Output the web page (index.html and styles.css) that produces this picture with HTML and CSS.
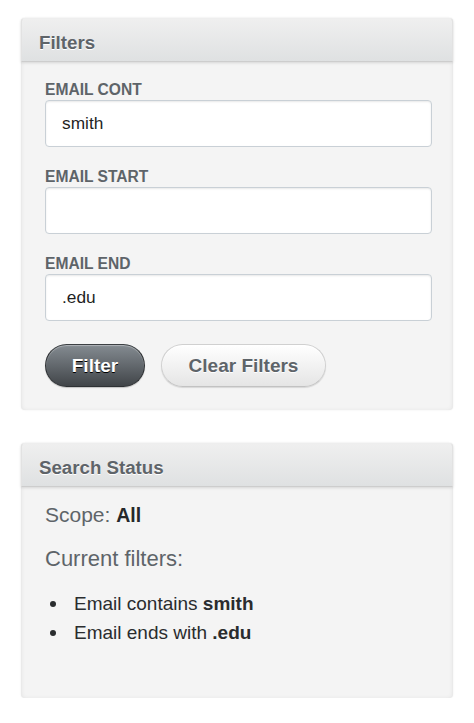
FILE: index.html
```html
<!DOCTYPE html>
<html>
<head>
<meta charset="utf-8">
<link rel="stylesheet" href="styles.css">
</head>
<body>
<div class="sidebar">
  <section class="panel">
    <h3 class="panel-title">Filters</h3>
    <form class="panel-body filters">
      <div class="field">
        <label class="label">EMAIL CONT</label>
        <input class="input" type="text" value="smith">
      </div>
      <div class="field">
        <label class="label">EMAIL START</label>
        <input class="input" type="text" value="">
      </div>
      <div class="field">
        <label class="label">EMAIL END</label>
        <input class="input" type="text" value=".edu">
      </div>
      <div class="actions">
        <button type="button" class="btn btn-dark">Filter</button>
        <button type="button" class="btn btn-light">Clear Filters</button>
      </div>
    </form>
  </section>

  <section class="panel">
    <h3 class="panel-title">Search Status</h3>
    <div class="panel-body status">
      <p class="scope">Scope: <b>All</b></p>
      <p class="current">Current filters:</p>
      <ul class="filter-list">
        <li class="filter-item">Email contains <b>smith</b></li>
        <li class="filter-item">Email ends with <b>.edu</b></li>
      </ul>
    </div>
  </section>
</div>
</body>
</html>
```

FILE: styles.css
```css
html, body {
  margin: 0;
  padding: 0;
  background: #ffffff;
}

body {
  font-family: "Liberation Sans", Arial, Helvetica, sans-serif;
  color: #323537;
}

.sidebar {
  padding: 18px 21px 0 21px;
  display: flex;
  flex-direction: column;
  gap: 33px;
}

.panel {
  background: #f4f4f4;
  border-radius: 4px;
  box-shadow: inset 0 1px 4px #dddddd, 0 0 2px rgba(0, 0, 0, 0.08);
}

.panel-title {
  margin: 0;
  padding: 12px 18px 6px 17px;
  font-size: 18.7px;
  line-height: 24px;
  font-weight: bold;
  color: #5e6469;
  text-shadow: 0 1px 0 #ffffff;
  background: linear-gradient(#efefef, #dfe1e2);
  border: 1px solid #e2e2e2;
  border-top-color: #eeeeee;
  border-bottom: 1px solid #cdcdcd;
  border-radius: 4px 4px 0 0;
  box-shadow: 0 1px 3px rgba(0, 0, 0, 0.12);
  height: 24px;
}

.filters {
  display: flex;
  flex-direction: column;
  padding: 18px 21px 23px 23px;
}

.field {
  display: flex;
  flex-direction: column;
  margin-bottom: 20px;
}

.label {
  font-size: 15.6px;
  line-height: 20px;
  font-weight: bold;
  color: #5e6469;
  margin-left: 1px;
}

.input {
  box-sizing: border-box;
  height: 47px;
  margin: 0 0 0 1px;
  padding: 0 16px;
  font-family: "Liberation Sans", Arial, sans-serif;
  font-size: 17.3px;
  color: #1f1f1f;
  background: #ffffff;
  border: 1px solid #c9d0d6;
  border-radius: 4px;
  box-shadow: inset 0 1px 2px #e8e8e8;
  outline: none;
}

.actions {
  display: flex;
  gap: 16px;
  margin-top: 3px;
  margin-left: 1px;
}

.btn {
  box-sizing: border-box;
  height: 43px;
  font-family: "Liberation Sans", Arial, sans-serif;
  font-size: 19px;
  font-weight: bold;
  line-height: 41px;
  border-radius: 200px;
  cursor: pointer;
}

.btn-dark {
  width: 100px;
  padding: 0;
  color: #ffffff;
  text-shadow: 0 1px 0 #000000;
  background: linear-gradient(#848b91, #414549);
  border: 1px solid #2e3134;
  border-top-color: #3c4043;
  box-shadow: inset 0 1px 1px rgba(255, 255, 255, 0.35), 0 1px 1px rgba(0, 0, 0, 0.2);
}

.btn-light {
  width: 165px;
  padding: 0;
  color: #5e6469;
  text-shadow: 0 1px 0 #ffffff;
  background: linear-gradient(#ffffff, #e5e5e5);
  border: 1px solid #d0d0d0;
  border-bottom-color: #c2c2c2;
  box-shadow: inset 0 1px 1px #ffffff, 0 1px 1px rgba(0, 0, 0, 0.12);
}

.status {
  padding: 14px 21px 51px 24px;
}

.scope {
  margin: 0;
  font-size: 21px;
  line-height: 28px;
  color: #5e6469;
}

.scope b {
  color: #26282a;
  font-size: 19.5px;
}

.current {
  margin: 16px 0 0 0;
  font-size: 22px;
  line-height: 28px;
  color: #5e6469;
}

.filter-list {
  list-style: none;
  margin: 16px 0 0 0;
  padding: 0;
}

.filter-item {
  display: flex;
  align-items: center;
  font-size: 19px;
  line-height: 29px;
  color: #2a2c2e;
  white-space: pre;
}

.filter-item::before {
  content: "";
  width: 6px;
  height: 6px;
  border-radius: 50%;
  background: #2a2c2e;
  margin-left: 5px;
  margin-right: 18px;
  flex: none;
}

.filter-item b {
  font-weight: bold;
}
```
